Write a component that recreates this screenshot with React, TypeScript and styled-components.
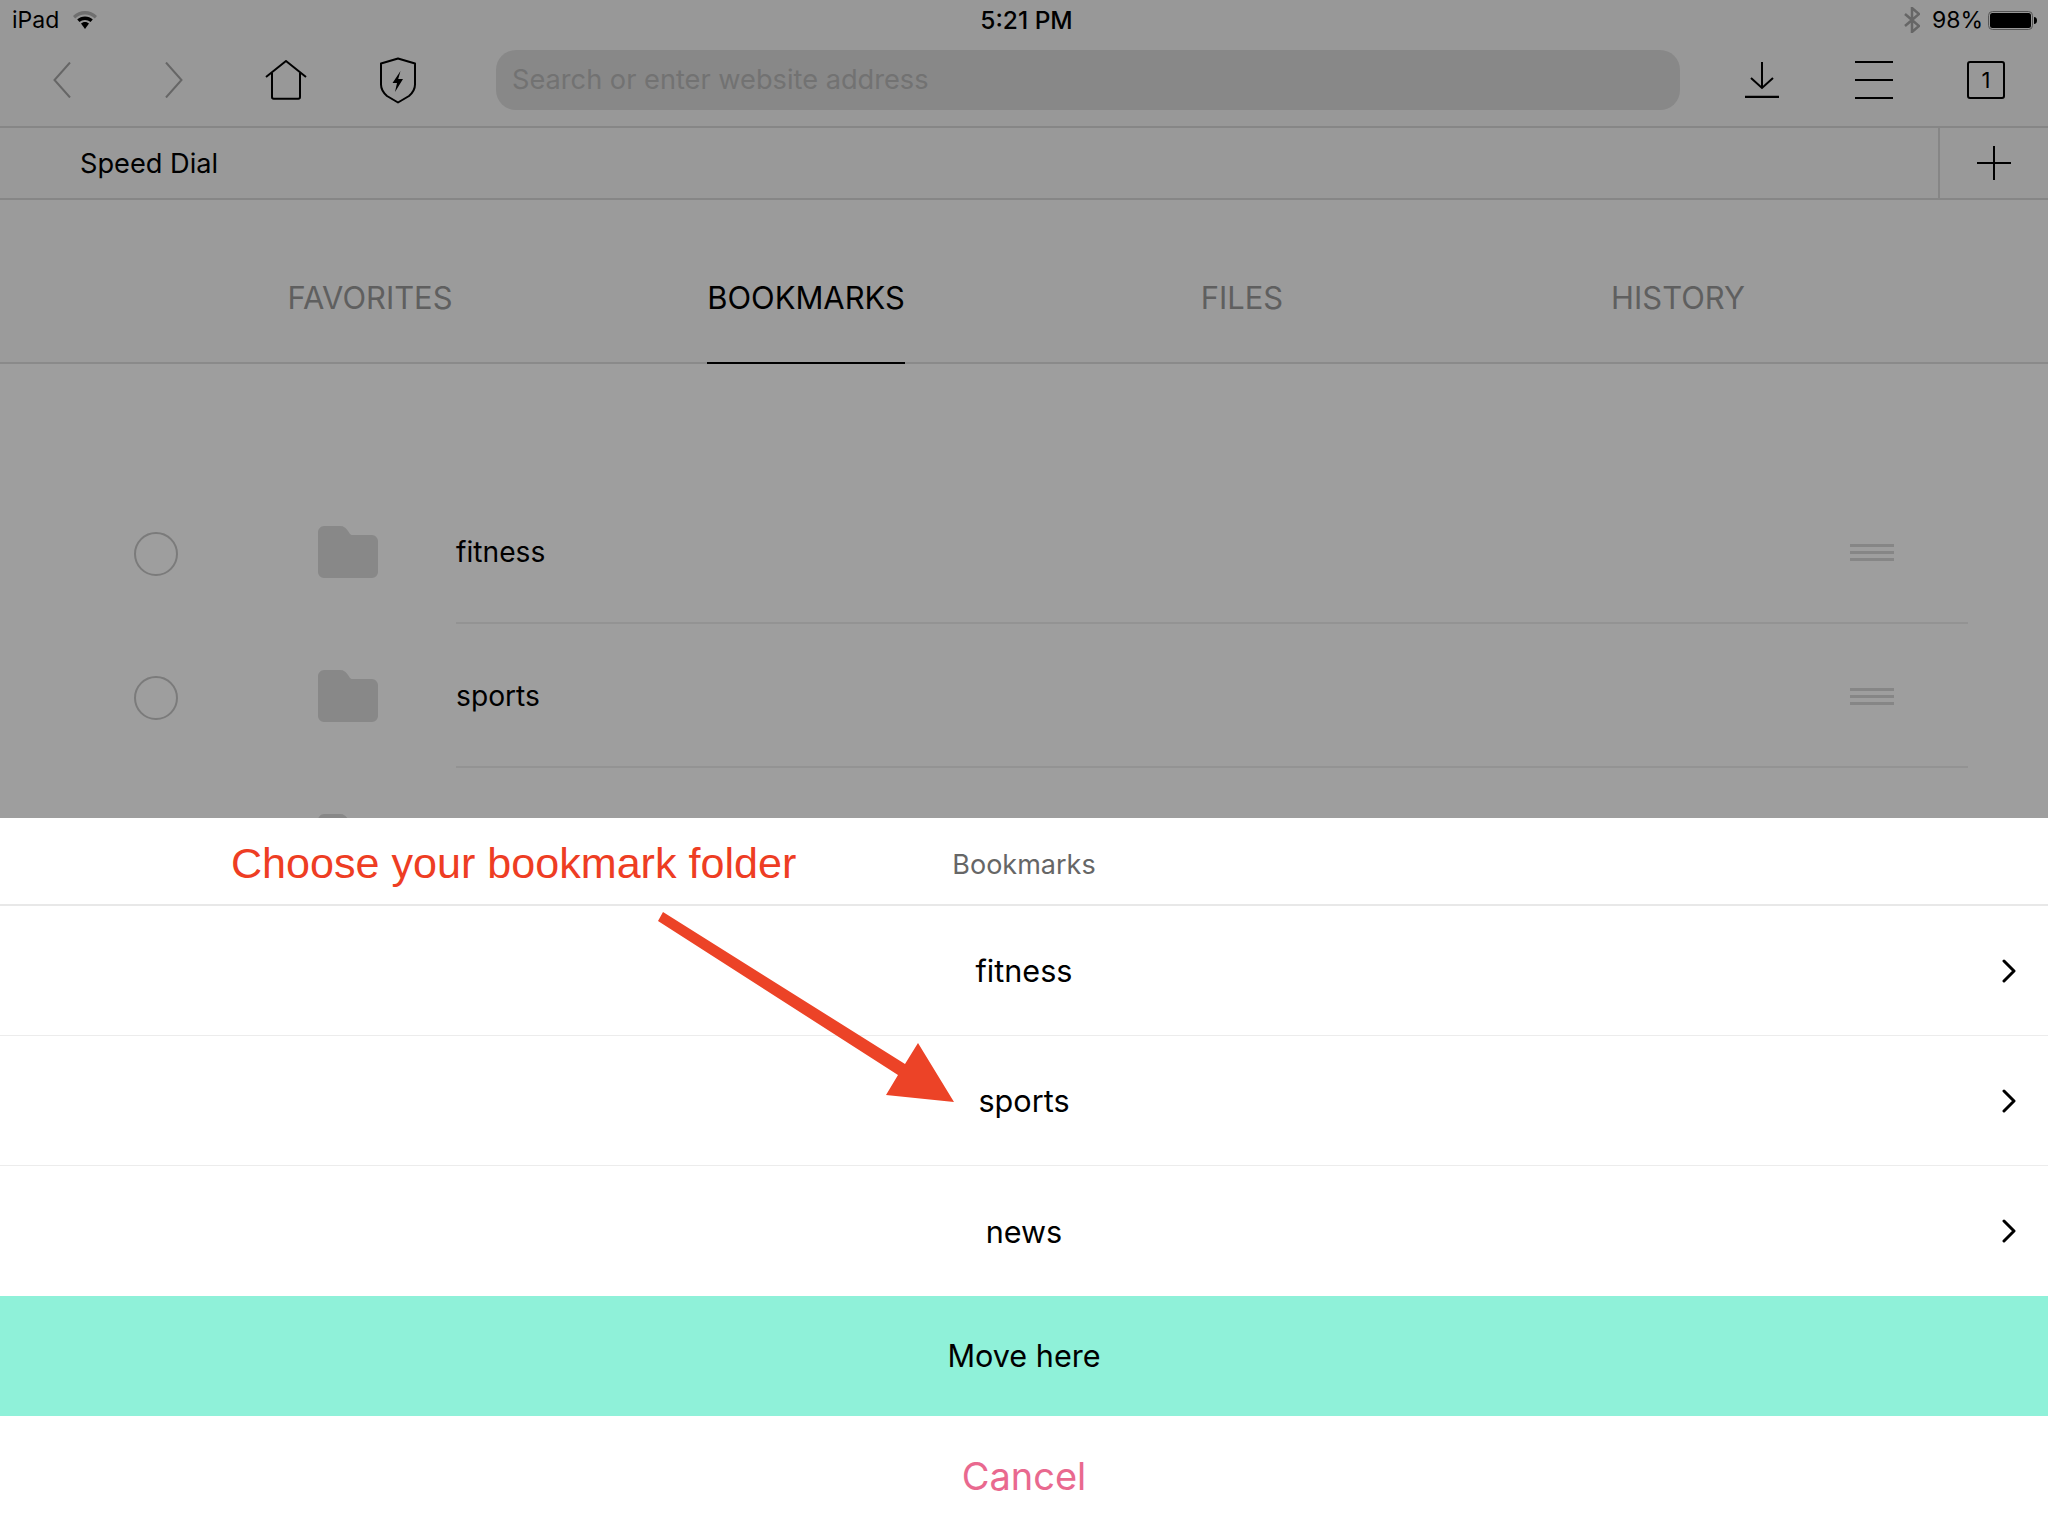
import styled, { createGlobalStyle } from 'styled-components'

const GlobalStyle = createGlobalStyle`
    html, body {
        margin: 0;
        padding: 0;
        background: #9e9e9e;
    }
    * {
        box-sizing: border-box;
    }
`

const Page = styled.div`
    position: relative;
    width: 2048px;
    height: 1536px;
    overflow: hidden;
    background: #9e9e9e;
    font-family: Inter, "Noto Sans", sans-serif;
    color: #000;
`

const StatusBar = styled.div`
    height: 40px;
    padding: 0 11px 0 12px;
    display: grid;
    grid-template-columns: 1fr auto 1fr;
    align-items: center;
    background: #989898;
    font-size: 23px;
`

const StatusLeft = styled.div`
    display: flex;
    align-items: center;
    gap: 14px;
`

const StatusRight = styled.div`
    display: flex;
    align-items: center;
    justify-content: flex-end;
    gap: 5px;
`

const Clock = styled.div`
    font-weight: 500;
    font-size: 24.5px;
    margin-left: 4px;
`

const Toolbar = styled.div`
    height: 88px;
    padding: 0 0 6px 53px;
    display: flex;
    align-items: center;
    background: #989898;
    border-bottom: 2px solid #868686;
`

const ToolIcon = styled.svg<{ $left?: number }>`
    flex: none;
    display: block;
    margin-left: ${(p) => p.$left ?? 0}px;
`

const BluetoothIcon = styled.svg`
    flex: none;
    margin-right: 7px;
`

const SearchBox = styled.div`
    flex: none;
    width: 1184px;
    height: 60px;
    margin-left: 80px;
    padding: 0 0 2px 16px;
    display: flex;
    align-items: center;
    border-radius: 20px;
    background: #888888;
    color: #727272;
    font-size: 27.2px;
`

const TabCount = styled.div`
    flex: none;
    width: 38px;
    height: 38px;
    margin-left: 74px;
    display: flex;
    align-items: center;
    justify-content: center;
    border: 2px solid #000;
    border-radius: 3px;
    font-size: 22px;
`

const SpeedDialStrip = styled.div`
    height: 72px;
    display: flex;
    background: #999999;
    border-bottom: 2px solid #868686;
`

const SpeedDialTitle = styled.div`
    flex: 1;
    padding-left: 80px;
    display: flex;
    align-items: center;
    font-size: 27.2px;
`

const AddTab = styled.div`
    width: 110px;
    display: flex;
    align-items: center;
    justify-content: center;
    border-left: 2px solid #868686;
`

const TabBar = styled.div`
    height: 164px;
    padding: 0 152px;
    display: grid;
    grid-template-columns: repeat(4, 436px);
    background: #9b9b9b;
    border-bottom: 2px solid #8a8a8a;
`

const TabCell = styled.div`
    display: flex;
    justify-content: center;
`

const TabLabel = styled.div<{ $active?: boolean }>`
    height: 164px;
    padding-top: 78px;
    font-size: 30.9px;
    line-height: 40px;
    color: ${(p) => (p.$active ? '#000' : '#5f5f5f')};
    border-bottom: 2px solid ${(p) => (p.$active ? '#000' : 'transparent')};
`

const BookmarkList = styled.div`
    padding-top: 116px;
`

const BookmarkRow = styled.div`
    height: 144px;
    display: flex;
    align-items: flex-start;
    padding-left: 134px;
`

const Radio = styled.div`
    flex: none;
    width: 44px;
    height: 44px;
    margin-top: 52px;
    border: 2px solid #7b7b7b;
    border-radius: 50%;
`

const FolderIcon = styled.svg`
    flex: none;
    margin: 46px 0 0 140px;
`

const RowBody = styled.div`
    flex: none;
    width: 1512px;
    height: 144px;
    margin-left: 78px;
    display: flex;
    align-items: center;
    justify-content: space-between;
    padding: 2px 74px 0 0;
    font-size: 28.2px;
    border-bottom: 2px solid #939393;
`

const Grip = styled.div`
    width: 44px;
    display: flex;
    flex-direction: column;
    gap: 4px;
    span {
        display: block;
        height: 3px;
        background: #868686;
    }
`

const Sheet = styled.div`
    position: absolute;
    left: 0;
    right: 0;
    bottom: 0;
    height: 718px;
    background: #fff;
`

const SheetHeader = styled.div`
    height: 88px;
    padding-top: 6px;
    display: flex;
    align-items: center;
    justify-content: center;
    color: #666;
    font-size: 27px;
    border-bottom: 2px solid #e8e8e8;
`

const FolderRow = styled.div<{ $last?: boolean }>`
    height: 130px;
    padding-right: 32px;
    display: grid;
    grid-template-columns: 46px 1fr 14px;
    align-items: center;
    text-align: center;
    font-size: 30.6px;
    border-bottom: ${(p) => (p.$last ? 'none' : '1px solid #ececec')};
`

const MoveButton = styled.div`
    height: 120px;
    padding-bottom: 2px;
    display: flex;
    align-items: center;
    justify-content: center;
    background: #8ff1d9;
    font-size: 30.6px;
`

const CancelButton = styled.div`
    height: 120px;
    display: flex;
    align-items: center;
    justify-content: center;
    color: #e9698f;
    font-size: 38px;
`

const Callout = styled.div`
    position: absolute;
    left: 231px;
    top: 835px;
    font-family: "Liberation Sans", Arial, sans-serif;
    font-size: 43.1px;
    line-height: 56px;
    color: #ee3d23;
`

const CalloutArrow = styled.svg`
    position: absolute;
    left: 0;
    top: 0;
    pointer-events: none;
`

const Chevron = () => (
    <svg width="14" height="24" viewBox="0 0 14 24" fill="none" stroke="#000" strokeWidth="3" strokeLinecap="round" strokeLinejoin="round">
        <path d="M2 2l10 10L2 22" />
    </svg>
)

const Folder = () => (
    <FolderIcon width="60" height="52" viewBox="0 0 60 52">
        <path fill="#888" d="M6 0h16c4 0 6 2 8 5l2 3c1 1 2 1 3 1h19c3 0 6 3 6 6v31c0 3-3 6-6 6H6c-3 0-6-3-6-6V6c0-3 3-6 6-6z" />
    </FolderIcon>
)

const folders = ['fitness', 'sports', 'news']

function App() {
    return (
        <Page>
            <GlobalStyle />
            <StatusBar>
                <StatusLeft>
                    iPad
                    <svg width="24" height="18" viewBox="0 0 24 18">
                        <path fill="#6f6f6f" d="M12 0C7.500 0 3.500 1.800 0 5l2.200 2.400C5 4.800 8.300 3.400 12 3.400s7 1.400 9.800 4L24 5c-3.500-3.200-7.500-5-12-5z" />
                        <path fill="#000" d="M12 5.500c-3 0-5.700 1.100-7.800 3.100l2.300 2.500C8 9.700 9.900 9 12 9s4 .7 5.500 2.100l2.300-2.500C17.700 6.600 15 5.500 12 5.500z" />
                        <path fill="#000" d="M12 11c-1.600 0-3 .6-4 1.600l4 5.400 4-5.400c-1-1-2.400-1.600-4-1.600z" />
                    </svg>
                </StatusLeft>
                <Clock>5:21 PM</Clock>
                <StatusRight>
                    <BluetoothIcon width="16" height="26" viewBox="0 0 16 26" fill="none" stroke="#666" strokeWidth="2.500">
                        <path d="M1 7l14 12-7 6V1l7 6L1 19" />
                    </BluetoothIcon>
                    98%
                    <svg width="49" height="19" viewBox="0 0 49 19">
                        <rect x="0.500" y="0.500" width="44" height="18" rx="4" fill="none" stroke="#555" />
                        <rect x="2" y="2" width="41" height="15" rx="2.500" fill="#000" />
                        <path fill="#000" d="M46 6c2 0 3 1.500 3 3.500S48 13 46 13z" />
                    </svg>
                </StatusRight>
            </StatusBar>
            <Toolbar>
                <ToolIcon width="18" height="36" viewBox="0 0 18 36" fill="none" stroke="#666" strokeWidth="2">
                    <path d="M17 0.500L1.500 18 17 35.500" />
                </ToolIcon>
                <ToolIcon $left={94} width="18" height="36" viewBox="0 0 18 36" fill="none" stroke="#666" strokeWidth="2">
                    <path d="M1 0.500L16.500 18 1 35.500" />
                </ToolIcon>
                <ToolIcon $left={82} width="42" height="40" viewBox="0 0 42 40" fill="none" stroke="#000" strokeWidth="2" strokeLinejoin="round">
                    <path d="M1 17L21 1l20 16M7 13v24c0 1 .7 1.700 1.700 1.700h24.600c1 0 1.700-.7 1.700-1.700V13" />
                </ToolIcon>
                <ToolIcon $left={73} width="36" height="47" viewBox="0 0 36 47" fill="none" stroke="#000" strokeWidth="2" strokeLinejoin="round">
                    <path d="M18 1.500L35 6.500v21c0 5-2 8-6 11.500l-11 6.500L7 39C3 35.500 1 32.500 1 27.500v-21z" />
                    <path fill="#000" stroke="none" d="M20.500 14l-8 12h4.500l-2 9 8-13h-4.800z" />
                </ToolIcon>
                <SearchBox>Search or enter website address</SearchBox>
                <ToolIcon $left={65} width="34" height="36" viewBox="0 0 34 36" fill="none" stroke="#000" strokeWidth="2">
                    <path d="M17 0v26M6 16l11 10 11-10" />
                    <path strokeWidth="2.500" d="M0 35h34" />
                </ToolIcon>
                <ToolIcon $left={76} width="38" height="38" viewBox="0 0 38 38" fill="none" stroke="#000" strokeWidth="2">
                    <path d="M0 1h38M0 19h38M0 37h38" />
                </ToolIcon>
                <TabCount>1</TabCount>
            </Toolbar>
            <SpeedDialStrip>
                <SpeedDialTitle>Speed Dial</SpeedDialTitle>
                <AddTab>
                    <svg width="34" height="34" viewBox="0 0 34 34" fill="none" stroke="#000" strokeWidth="2">
                        <path d="M17 0v34M0 17h34" />
                    </svg>
                </AddTab>
            </SpeedDialStrip>
            <TabBar>
                <TabCell><TabLabel>FAVORITES</TabLabel></TabCell>
                <TabCell><TabLabel $active>BOOKMARKS</TabLabel></TabCell>
                <TabCell><TabLabel>FILES</TabLabel></TabCell>
                <TabCell><TabLabel>HISTORY</TabLabel></TabCell>
            </TabBar>
            <BookmarkList>
                <BookmarkRow>
                    <Radio />
                    <Folder />
                    <RowBody>
                        fitness
                        <Grip><span /><span /><span /></Grip>
                    </RowBody>
                </BookmarkRow>
                <BookmarkRow>
                    <Radio />
                    <Folder />
                    <RowBody>
                        sports
                        <Grip><span /><span /><span /></Grip>
                    </RowBody>
                </BookmarkRow>
                {/* third row is behind the sheet, only the folder top peeks out */}
                <BookmarkRow>
                    <Radio />
                    <Folder />
                </BookmarkRow>
            </BookmarkList>
            <Sheet>
                <SheetHeader>Bookmarks</SheetHeader>
                {folders.map((name, i) => (
                    <FolderRow key={name} $last={i === folders.length - 1}>
                        <span />
                        {name}
                        <Chevron />
                    </FolderRow>
                ))}
                <MoveButton>Move here</MoveButton>
                <CancelButton>Cancel</CancelButton>
            </Sheet>
            <Callout>Choose your bookmark folder</Callout>
            <CalloutArrow width="2048" height="1536" viewBox="0 0 2048 1536">
                <path fill="#ec4327" d="M663 912L658 921 898 1075 886 1095 954 1102 918 1043 905 1064z" />
            </CalloutArrow>
        </Page>
    )
}

export default App
